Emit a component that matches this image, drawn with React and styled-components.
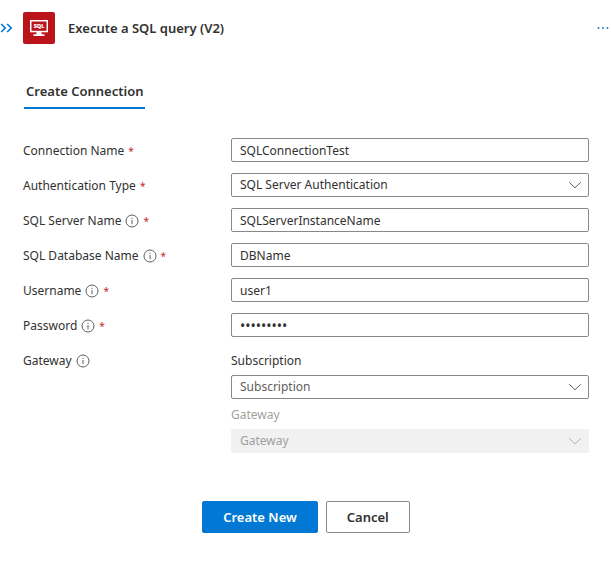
import React from "react";
import styled, { createGlobalStyle } from "styled-components";

const GlobalStyle = createGlobalStyle`
  *, *::before, *::after { box-sizing: border-box; }
  body {
    margin: 0;
    background: #ffffff;
    color: #323130;
    font-family: "Noto Sans", "Open Sans", sans-serif;
    font-size: 12px;
    line-height: 16px;
  }
  button, input, select { font: inherit; color: inherit; }
`;

const Panel = styled.main`
  padding-bottom: 32px;
`;

const Header = styled.header`
  display: flex;
  align-items: center;
  padding: 12px 0 0;
`;

const IconButton = styled.button`
  display: flex;
  align-items: center;
  justify-content: ${(p) => p.$align || "flex-start"};
  width: 23px;
  height: 32px;
  padding: 0;
  border: 0;
  background: transparent;
  color: #0078d4;
  cursor: pointer;
`;

const ConnectorTile = styled.span`
  display: flex;
  width: 32px;
  height: 32px;
  border-radius: 2px;
  overflow: hidden;
  background: #ba141a;
`;

const Title = styled.h1`
  flex: 1;
  margin: 0 0 0 13px;
  font-size: 13px;
  line-height: 20px;
  font-weight: 600;
`;

const Tabs = styled.div`
  display: flex;
  padding: 37px 24px 0;
`;

const Tab = styled.button`
  padding: 0 2px 6px;
  border: 0;
  border-bottom: 2px solid #0078d4;
  background: transparent;
  font-size: 13px;
  line-height: 20px;
  font-weight: 600;
`;

const Form = styled.form`
  display: grid;
  gap: 11px;
  padding: 29px 22px 0 23px;
`;

const Row = styled.div`
  display: grid;
  grid-template-columns: 208px minmax(0, 1fr);
  align-items: start;
`;

const RowLabel = styled.label`
  display: flex;
  align-items: center;
  gap: 4px;
  height: 26px;
  margin-bottom: -2px;
`;

const Required = styled.span`
  color: #c4262c;
  font-size: 10px;
`;

const control = `
  width: 100%;
  height: 24px;
  padding: 0 8px;
  border: 1px solid #8a8886;
  border-radius: 2px;
  background: #ffffff;
  outline: none;
`;

const TextInput = styled.input`
  ${control}

  &[type="password"] { font-size: 14px; }
`;

const SelectBox = styled.div`
  display: grid;
  align-items: center;
  color: ${(p) => (p.$disabled ? "#b3b0ad" : "#605e5c")};

  > * { grid-area: 1 / 1; }
  > svg {
    justify-self: end;
    margin-right: 7px;
    pointer-events: none;
  }
`;

const Select = styled.select`
  ${control}
  appearance: none;
  color: ${(p) => (p.$placeholder ? "#605e5c" : "#323130")};

  &:disabled {
    border-color: #f1f1f1;
    background: #f1f1f1;
    color: #a19f9d;
    opacity: 1;
  }
`;

const GatewayFields = styled.div`
  display: grid;
  gap: 3px;
`;

const FieldLabel = styled.label`
  display: flex;
  align-items: center;
  height: 24px;
  padding-top: 2px;
  color: ${(p) => (p.$disabled ? "#a19f9d" : "#323130")};
`;

const Actions = styled.div`
  display: flex;
  justify-content: center;
  gap: 8px;
  padding-top: 37px;
`;

const ActionButton = styled.button`
  height: 32px;
  padding: 0 20px;
  border: 1px solid ${(p) => (p.$primary ? "#0078d4" : "#8a8886")};
  border-radius: 2px;
  background: ${(p) => (p.$primary ? "#0078d4" : "#ffffff")};
  color: ${(p) => (p.$primary ? "#ffffff" : "#323130")};
  font-size: 13px;
  font-weight: 600;
  cursor: pointer;
`;

const InfoIcon = () => (
  <svg width="14" height="14" viewBox="0 0 14 14" fill="none" role="img" aria-label="Info">
    <circle cx="7" cy="7" r="6" stroke="#605e5c" />
    <path d="M7 6v4.200" stroke="#605e5c" />
    <path d="M7 3.800v1.200" stroke="#605e5c" />
  </svg>
);

const ChevronDown = () => (
  <svg width="14" height="8" viewBox="0 0 14 8" fill="none" stroke="currentColor" aria-hidden="true">
    <path d="M1.2 1.2 7 6.800l5.8-5.600" />
  </svg>
);

const DoubleChevron = () => (
  <svg width="14" height="10" viewBox="0 0 14 10" fill="none" stroke="currentColor" strokeWidth="1.7" aria-hidden="true">
    <path d="M1.200 1 5.200 5l-4 4M7.200 1l4 4-4 4" />
  </svg>
);

const MoreIcon = () => (
  <svg width="14" height="4" viewBox="0 0 14 4" fill="currentColor" aria-hidden="true">
    <circle cx="1.500" cy="2" r="0.9" />
    <circle cx="6" cy="2" r="0.9" />
    <circle cx="10.500" cy="2" r="0.9" />
  </svg>
);

const SqlIcon = () => (
  <svg width="32" height="32" viewBox="0 0 32 32" aria-hidden="true">
    <rect x="7.750" y="8.750" width="16.500" height="10.800" fill="none" stroke="#fff" strokeWidth="1.500" />
    <path d="M13.500 20h5v2.200h3V24h-11v-1.800h3z" fill="#fff" />
    <text x="16" y="16.200" textAnchor="middle" fill="#fff" stroke="#fff" strokeWidth="0.2" fontSize="5.500" fontWeight="800">SQL</text>
  </svg>
);

const Dropdown = ({ id, value, disabled, placeholder }) => (
  <SelectBox $disabled={disabled}>
    <Select id={id} disabled={disabled} $placeholder={placeholder} defaultValue={value}>
      <option>{value}</option>
    </Select>
    <ChevronDown />
  </SelectBox>
);

const fields = [
  { id: "connection-name", label: "Connection Name", value: "SQLConnectionTest" },
  { id: "auth-type", label: "Authentication Type", value: "SQL Server Authentication", kind: "select" },
  { id: "server-name", label: "SQL Server Name", value: "SQLServerInstanceName", info: true },
  { id: "database-name", label: "SQL Database Name", value: "DBName", info: true },
  { id: "username", label: "Username", value: "user1", info: true },
  { id: "password", label: "Password", value: "passw0rd!", info: true, kind: "password" },
];

export default function App() {
  return (
    <>
      <GlobalStyle />
      <Panel>
        <Header>
          <IconButton type="button" aria-label="Collapse panel">
            <DoubleChevron />
          </IconButton>
          <ConnectorTile>
            <SqlIcon />
          </ConnectorTile>
          <Title>Execute a SQL query (V2)</Title>
          <IconButton type="button" aria-label="More options" $align="flex-end">
            <MoreIcon />
          </IconButton>
        </Header>
        <Tabs role="tablist">
          <Tab type="button" role="tab" aria-selected="true">Create Connection</Tab>
        </Tabs>
        <Form onSubmit={(e) => e.preventDefault()}>
          {fields.map((f) => (
            <Row key={f.id}>
              <RowLabel htmlFor={f.id}>
                {f.label}
                {f.info && <InfoIcon />}
                <Required>*</Required>
              </RowLabel>
              {f.kind === "select" ? (
                <Dropdown id={f.id} value={f.value} />
              ) : (
                <TextInput id={f.id} type={f.kind || "text"} defaultValue={f.value} autoComplete="off" />
              )}
            </Row>
          ))}
          <Row role="group" aria-labelledby="gateway-group">
            <RowLabel as="div" id="gateway-group">
              Gateway
              <InfoIcon />
            </RowLabel>
            <GatewayFields>
              <FieldLabel htmlFor="subscription">Subscription</FieldLabel>
              <Dropdown id="subscription" value="Subscription" placeholder />
              <FieldLabel htmlFor="gateway" $disabled>Gateway</FieldLabel>
              <Dropdown id="gateway" value="Gateway" disabled />
            </GatewayFields>
          </Row>
          <Actions>
            <ActionButton type="submit" $primary>Create New</ActionButton>
            <ActionButton type="button">Cancel</ActionButton>
          </Actions>
        </Form>
      </Panel>
    </>
  );
}
